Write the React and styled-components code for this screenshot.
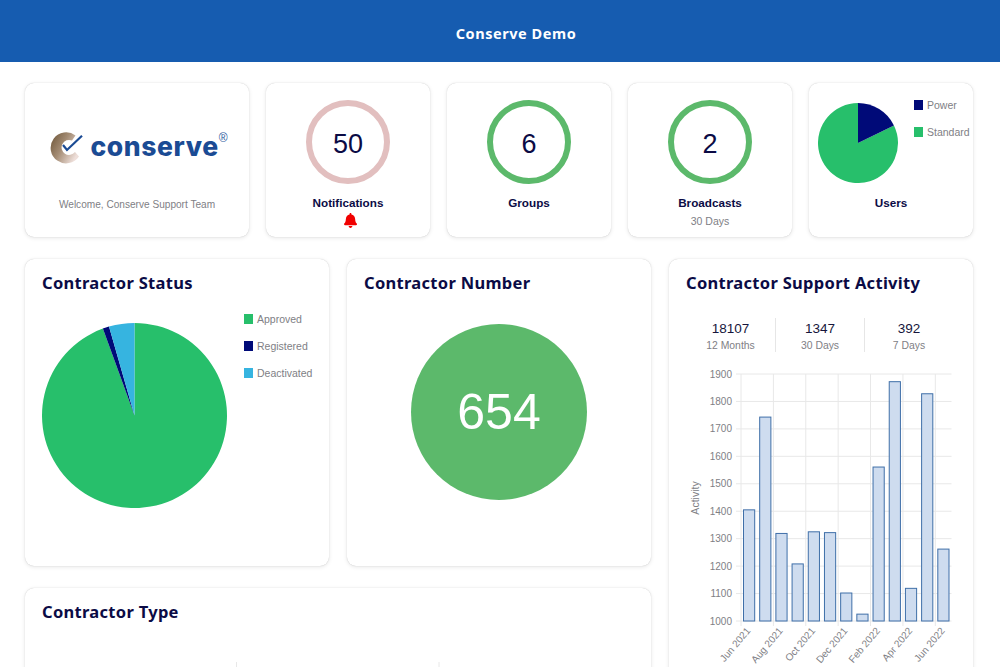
import React from 'react'
import styled, { createGlobalStyle } from 'styled-components'

const navy = '#0b0b45'
const green = '#5cb96b'

const GlobalStyle = createGlobalStyle`
  html, body {
    margin: 0;
    height: 667px;
    overflow: hidden;
    background: #fff;
    font-family: "Liberation Sans", Arial, sans-serif;
  }
`

const Header = styled.header`
  height: 62px;
  box-sizing: border-box;
  padding: 4px 0 0 32px;
  background: #165cb0;
  color: #fff;
  display: flex;
  align-items: center;
  justify-content: center;
  font-family: "Noto Sans", sans-serif;
  font-weight: 700;
  font-size: 14.5px;
  letter-spacing: 0.55px;
`

const Page = styled.main`
  padding: 21px 27px 0 25px;
  display: flex;
  flex-direction: column;
  gap: 22px;
`

const TopRow = styled.div`
  display: grid;
  grid-template-columns: 224px repeat(4, 164px);
  gap: 17px;
`

const Card = styled.section`
  background: #fff;
  border-radius: 9px;
  box-shadow: 0 0 1px rgba(0, 0, 0, 0.22), 0 1px 4px rgba(0, 0, 0, 0.1);
  box-sizing: border-box;
`

const StatCard = styled(Card)`
  height: 154px;
  display: flex;
  flex-direction: column;
  align-items: center;
  padding-top: 17px;
`

const LogoCard = styled(Card)`
  height: 154px;
  display: flex;
  flex-direction: column;
  align-items: center;
`

const LogoRow = styled.div`
  display: flex;
  align-items: flex-start;
  margin-top: 49px;
  margin-left: 4px;
  height: 40px;
`

const LogoWord = styled.span`
  font-family: Inter, sans-serif;
  font-weight: 800;
  font-size: 26.5px;
  letter-spacing: 0.6px;
  line-height: 30px;
  color: #1b4b94;
  margin-left: 7px;
  margin-top: -1px;
`

const LogoMark = styled.span`
  font-size: 12px;
  line-height: 12px;
  color: #2c5a9e;
`

const Welcome = styled.div`
  margin-top: 27px;
  font-size: 10.1px;
  color: #808085;
`

const Ring = styled.div`
  width: 84px;
  height: 84px;
  border-radius: 50%;
  border: 6px solid ${p => p.$color};
  box-sizing: border-box;
  display: flex;
  align-items: center;
  justify-content: center;
  font-size: 27px;
  padding-top: 4px;
  color: ${navy};
`

const StatLabel = styled.div`
  margin-top: 11px;
  font-size: 11.7px;
  line-height: 16px;
  font-weight: 700;
  color: ${navy};
`

const StatSub = styled.div`
  margin-top: 3px;
  font-size: 10.5px;
  line-height: 14px;
  color: #808085;
`

const BellWrap = styled.div`
  margin-top: 2px;
  margin-left: 5px;
  line-height: 0;
`

const UsersBody = styled.div`
  display: flex;
  align-items: flex-start;
  width: 100%;
  box-sizing: border-box;
  padding: 0 0 0 9px;
  height: 81px;
  margin-top: 3px;
`

const Legend = styled.ul`
  list-style: none;
  margin: ${p => p.$top}px 0 0 ${p => p.$left}px;
  padding: 0;
  display: flex;
  flex-direction: column;
  gap: 14px;
`

const LegendItem = styled.li`
  display: flex;
  align-items: center;
  gap: 4px;
  height: 13px;
  font-size: 10.5px;
  color: #808085;
  white-space: nowrap;
`

const Swatch = styled.i`
  width: 9px;
  height: 10px;
  background: ${p => p.$color};
`

const Grid = styled.div`
  display: grid;
  grid-template-columns: repeat(3, 304px);
  grid-template-rows: 307px auto;
  column-gap: 18px;
  row-gap: 22px;
`

const ChartCard = styled(Card)`
  padding: 13px 17px 0;
  ${p => p.$wide && 'grid-column: span 2; height: 240px;'}
  ${p => p.$tall && 'grid-column: 3; grid-row: 1 / span 2; height: 480px;'}
`

const Title = styled.h2`
  margin: 0;
  font-family: "Noto Sans", sans-serif;
  font-weight: 700;
  font-size: 16.5px;
  line-height: 22px;
  letter-spacing: 0.3px;
  color: ${navy};
`

const StatusBody = styled.div`
  display: flex;
  align-items: flex-start;
  margin-top: 29px;
`

const BigCircle = styled.div`
  width: 176px;
  height: 176px;
  border-radius: 50%;
  background: ${green};
  color: #fff;
  font-size: 50px;
  display: flex;
  align-items: center;
  justify-content: center;
  margin: 30px auto 0;
`

const Totals = styled.div`
  display: grid;
  grid-template-columns: repeat(3, 89px);
  margin: 24px 0 0 0;
`

const Total = styled.div`
  text-align: center;
  height: 34px;
  padding-top: 2px;
  box-sizing: border-box;
  border-left: ${p => (p.$first ? 'none' : '1px solid #e6e6e6')};
`

const TotalValue = styled.div`
  font-size: 13.5px;
  line-height: 17px;
  color: #16163c;
`

const TotalLabel = styled.div`
  font-size: 10.4px;
  line-height: 17px;
  color: #808085;
`

const ChartSvg = styled.svg`
  display: block;
  margin: 13px 0 0 -17px;
`

const TypeTicks = styled.svg`
  display: block;
  margin: 0;
`

// pie slice from start to end, degrees clockwise from 12 o'clock
function slice(cx, cy, r, a0, a1) {
  const p = a => [cx + r * Math.sin((a * Math.PI) / 180), cy - r * Math.cos((a * Math.PI) / 180)]
  const [x0, y0] = p(a0)
  const [x1, y1] = p(a1)
  return `M${cx} ${cy}L${x0} ${y0}A${r} ${r} 0 ${a1 - a0 > 180 ? 1 : 0} 1 ${x1} ${y1}Z`
}

const PieSvg = styled.svg`
  flex: none;
`

const Pie = ({ size, slices }) => {
  const r = size / 2
  return (
    <PieSvg width={size} height={size}>
      {slices.map(s => (
        <path key={s.color} d={slice(r, r, r, s.from, s.to)} fill={s.color} />
      ))}
    </PieSvg>
  )
}

const Bell = () => (
  <svg width="13" height="15" viewBox="0 0 448 512" fill="#f00000">
    <path d="M224 512c35.3 0 64-28.700 64-64H160c0 35.300 28.700 64 64 64zm215.400-149.700c-19.300-20.800-55.500-52-55.500-154.300 0-77.700-54.500-139.900-127.900-155.200V32c0-17.700-14.300-32-32-32s-32 14.300-32 32v20.800C118.600 68.100 64.100 130.300 64.100 208c0 102.300-36.200 133.500-55.500 154.300-6 6.400-8.700 14.100-8.600 21.700.1 16.400 13 32 32.100 32h383.800c19.100 0 32-15.600 32.100-32 .1-7.600-2.600-15.300-8.600-21.700z" />
  </svg>
)

const LogoIcon = () => (
  <svg width="33" height="32" viewBox="0 0 33 32">
    <defs>
      <linearGradient id="logoRing" x1="0" y1="0" x2="1" y2="0.6">
        <stop offset="0" stopColor="#6a5235" />
        <stop offset="0.5" stopColor="#a48c74" />
        <stop offset="1" stopColor="#eedfda" />
      </linearGradient>
    </defs>
    <path d="M25.500 3.500A15.500 15.500 0 1 0 29 24.500L25 20A7.500 7.500 0 1 1 22 8.500Z" fill="url(#logoRing)" />
    <path d="M13 13l4 5L32 3.700" fill="none" stroke="#1b4b94" strokeWidth="2.200" />
  </svg>
)

const activity = [1405, 1743, 1319, 1208, 1325, 1322, 1102, 1025, 1561, 1872, 1119, 1828, 1262]
const tickLabels = ['Jun 2021', 'Aug 2021', 'Oct 2021', 'Dec 2021', 'Feb 2022', 'Apr 2022', 'Jun 2022']

// svg origin sits at card x = 0, chart area from x0 to x0 + w
const ActivityChart = () => {
  const x0 = 72
  const w = 210.500
  const top = 9
  const h = 247
  const step = w / 13
  const y = v => top + ((1900 - v) / 900) * h
  const rows = [1900, 1800, 1700, 1600, 1500, 1400, 1300, 1200, 1100, 1000]
  return (
    <ChartSvg width="304" height="302" fontFamily="'Liberation Sans', Arial, sans-serif">
      {rows.map(v => (
        <g key={v}>
          <line x1={x0 - 5} x2={x0 + w} y1={y(v)} y2={y(v)} stroke="#e8e8e8" />
          <text x={63} y={y(v) + 3.600} textAnchor="end" fontSize="10" fill="#808085">{v}</text>
        </g>
      ))}
      {tickLabels.map((t, i) => {
        const x = x0 + i * step * 2
        return (
          <g key={t}>
            <line x1={x} x2={x} y1={top} y2={y(1000) + 5} stroke="#e8e8e8" />
            <text
              transform={`translate(${x + 10} ${y(1000) + 10}) rotate(-50)`}
              textAnchor="end"
              fontSize="10"
              fill="#808085"
            >
              {t}
            </text>
          </g>
        )
      })}
      {activity.map((v, i) => (
        <rect
          key={i}
          x={x0 + i * step + 2.500}
          y={y(v)}
          width={step - 5}
          height={y(1000) - y(v)}
          fill="#cedcef"
          stroke="#3f6fa8"
          strokeWidth="1"
        />
      ))}
      <text
        transform={`translate(30 ${top + 124}) rotate(-90)`}
        textAnchor="middle"
        fontSize="10.500"
        fill="#808085"
      >
        Activity
      </text>
    </ChartSvg>
  )
}

export default function App() {
  return (
    <>
      <GlobalStyle />
      <Header>Conserve Demo</Header>
      <Page>
        <TopRow>
          <LogoCard>
            <LogoRow>
              <LogoIcon />
              <LogoWord>conserve</LogoWord>
              <LogoMark>®</LogoMark>
            </LogoRow>
            <Welcome>Welcome, Conserve Support Team</Welcome>
          </LogoCard>
          <StatCard>
            <Ring $color="#e2bfbf">50</Ring>
            <StatLabel>Notifications</StatLabel>
            <BellWrap><Bell /></BellWrap>
          </StatCard>
          <StatCard>
            <Ring $color={green}>6</Ring>
            <StatLabel>Groups</StatLabel>
          </StatCard>
          <StatCard>
            <Ring $color={green}>2</Ring>
            <StatLabel>Broadcasts</StatLabel>
            <StatSub>30 Days</StatSub>
          </StatCard>
          <StatCard>
            <UsersBody>
              <Pie
                size={80}
                slices={[
                  { color: '#27bf6b', from: 64, to: 360 },
                  { color: '#000a78', from: 0, to: 64 },
                ]}
              />
              <Legend $top={-5} $left={16}>
                <LegendItem><Swatch $color="#000a78" />Power</LegendItem>
                <LegendItem><Swatch $color="#27bf6b" />Standard</LegendItem>
              </Legend>
            </UsersBody>
            <StatLabel>Users</StatLabel>
          </StatCard>
        </TopRow>
        <Grid>
          <ChartCard>
            <Title>Contractor Status</Title>
            <StatusBody>
              <Pie
                size={185}
                slices={[
                  { color: '#27bf6b', from: 0, to: 340 },
                  { color: '#000a78', from: 340, to: 344 },
                  { color: '#36b4e0', from: 344, to: 360 },
                ]}
              />
              <Legend $top={-11} $left={17}>
                <LegendItem><Swatch $color="#27bf6b" />Approved</LegendItem>
                <LegendItem><Swatch $color="#000a78" />Registered</LegendItem>
                <LegendItem><Swatch $color="#36b4e0" />Deactivated</LegendItem>
              </Legend>
            </StatusBody>
          </ChartCard>
          <ChartCard>
            <Title>Contractor Number</Title>
            <BigCircle>654</BigCircle>
          </ChartCard>
          <ChartCard $tall>
            <Title>Contractor Support Activity</Title>
            <Totals>
              <Total $first>
                <TotalValue>18107</TotalValue>
                <TotalLabel>12 Months</TotalLabel>
              </Total>
              <Total>
                <TotalValue>1347</TotalValue>
                <TotalLabel>30 Days</TotalLabel>
              </Total>
              <Total>
                <TotalValue>392</TotalValue>
                <TotalLabel>7 Days</TotalLabel>
              </Total>
            </Totals>
            <ActivityChart />
          </ChartCard>
          <ChartCard $wide>
            <Title>Contractor Type</Title>
            <TypeTicks width="592" height="60">
              <line x1="194.500" x2="194.500" y1="39" y2="60" stroke="#e8e8e8" />
              <line x1="397" x2="397" y1="39" y2="60" stroke="#e8e8e8" />
            </TypeTicks>
          </ChartCard>
        </Grid>
      </Page>
    </>
  )
}
